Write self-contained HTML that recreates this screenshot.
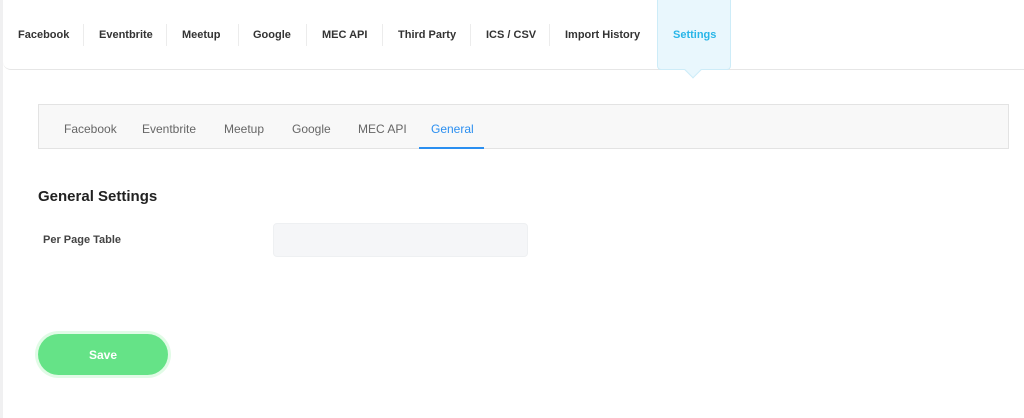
<!DOCTYPE html>
<html><head><style>
*{margin:0;padding:0;box-sizing:border-box}
body{width:1024px;height:418px;background:#f0f0f1;font-family:"Liberation Sans",sans-serif;position:relative;overflow:hidden}
.main{position:absolute;left:3px;top:0;width:1021px;height:418px;background:#fff}
.top{position:absolute;left:3px;top:0;width:1021px;height:70px;background:#fff;border-bottom:1px solid #e6e6e6;border-radius:0 0 0 8px}
.t{position:absolute;top:29px;font-size:11px;font-weight:bold;color:#333;white-space:nowrap}
.sep{position:absolute;top:24px;width:1px;height:22px;background:#ececec}
.set{position:absolute;left:657px;top:-1px;width:74px;height:71px;background:#e9f7fd;border:1px solid #cdecf8;border-top:none;border-radius:0 0 4px 4px}
.arrow{position:absolute;left:687px;top:64px;width:12px;height:12px;background:#e9f7fd;border-right:1px solid #cdecf8;border-bottom:1px solid #cdecf8;transform:rotate(45deg)}
.sub{position:absolute;left:38px;top:104px;width:971px;height:45px;background:#f8f8f8;border:1px solid #e3e3e3}
.s{position:absolute;top:122px;font-size:12px;color:#666;white-space:nowrap}
</style></head><body>
<div class="main"></div>
<div class="top"></div>
<div class="set"></div><div class="arrow"></div>
<span class="t" style="left:18px">Facebook</span>
<div class="sep" style="left:83px"></div>
<span class="t" style="left:99px">Eventbrite</span>
<div class="sep" style="left:166px"></div>
<span class="t" style="left:182px">Meetup</span>
<div class="sep" style="left:238px"></div>
<span class="t" style="left:253px">Google</span>
<div class="sep" style="left:306px"></div>
<span class="t" style="left:322px">MEC API</span>
<div class="sep" style="left:382px"></div>
<span class="t" style="left:398px">Third Party</span>
<div class="sep" style="left:470px"></div>
<span class="t" style="left:486px">ICS / CSV</span>
<div class="sep" style="left:549px"></div>
<span class="t" style="left:565px">Import History</span>
<span class="t" style="left:673px;color:#29b6e8">Settings</span>
<div class="sub"></div>
<span class="s" style="left:64px">Facebook</span>
<span class="s" style="left:142px">Eventbrite</span>
<span class="s" style="left:224px">Meetup</span>
<span class="s" style="left:292px">Google</span>
<span class="s" style="left:358px">MEC API</span>
<span class="s" style="left:431px;color:#2b8ff0">General</span>
<div style="position:absolute;left:419px;top:147px;width:65px;height:2px;background:#2b8ff0"></div>
<div style="position:absolute;left:38px;top:188px;font-size:15px;font-weight:bold;color:#222">General Settings</div>
<div style="position:absolute;left:43px;top:234px;font-size:11px;font-weight:bold;color:#444">Per Page Table</div>
<div style="position:absolute;left:273px;top:223px;width:255px;height:34px;background:#f5f6f8;border:1px solid #eef0f2;border-radius:4px"></div>
<div style="position:absolute;left:35px;top:331px;width:136px;height:47px;background:#e1fbe6;border-radius:24px"></div>
<div style="position:absolute;left:38px;top:334px;width:130px;height:41px;background:#65e387;border-radius:21px;color:#fff;font-weight:bold;font-size:12px;text-align:center;line-height:43px">Save</div>
</body></html>
